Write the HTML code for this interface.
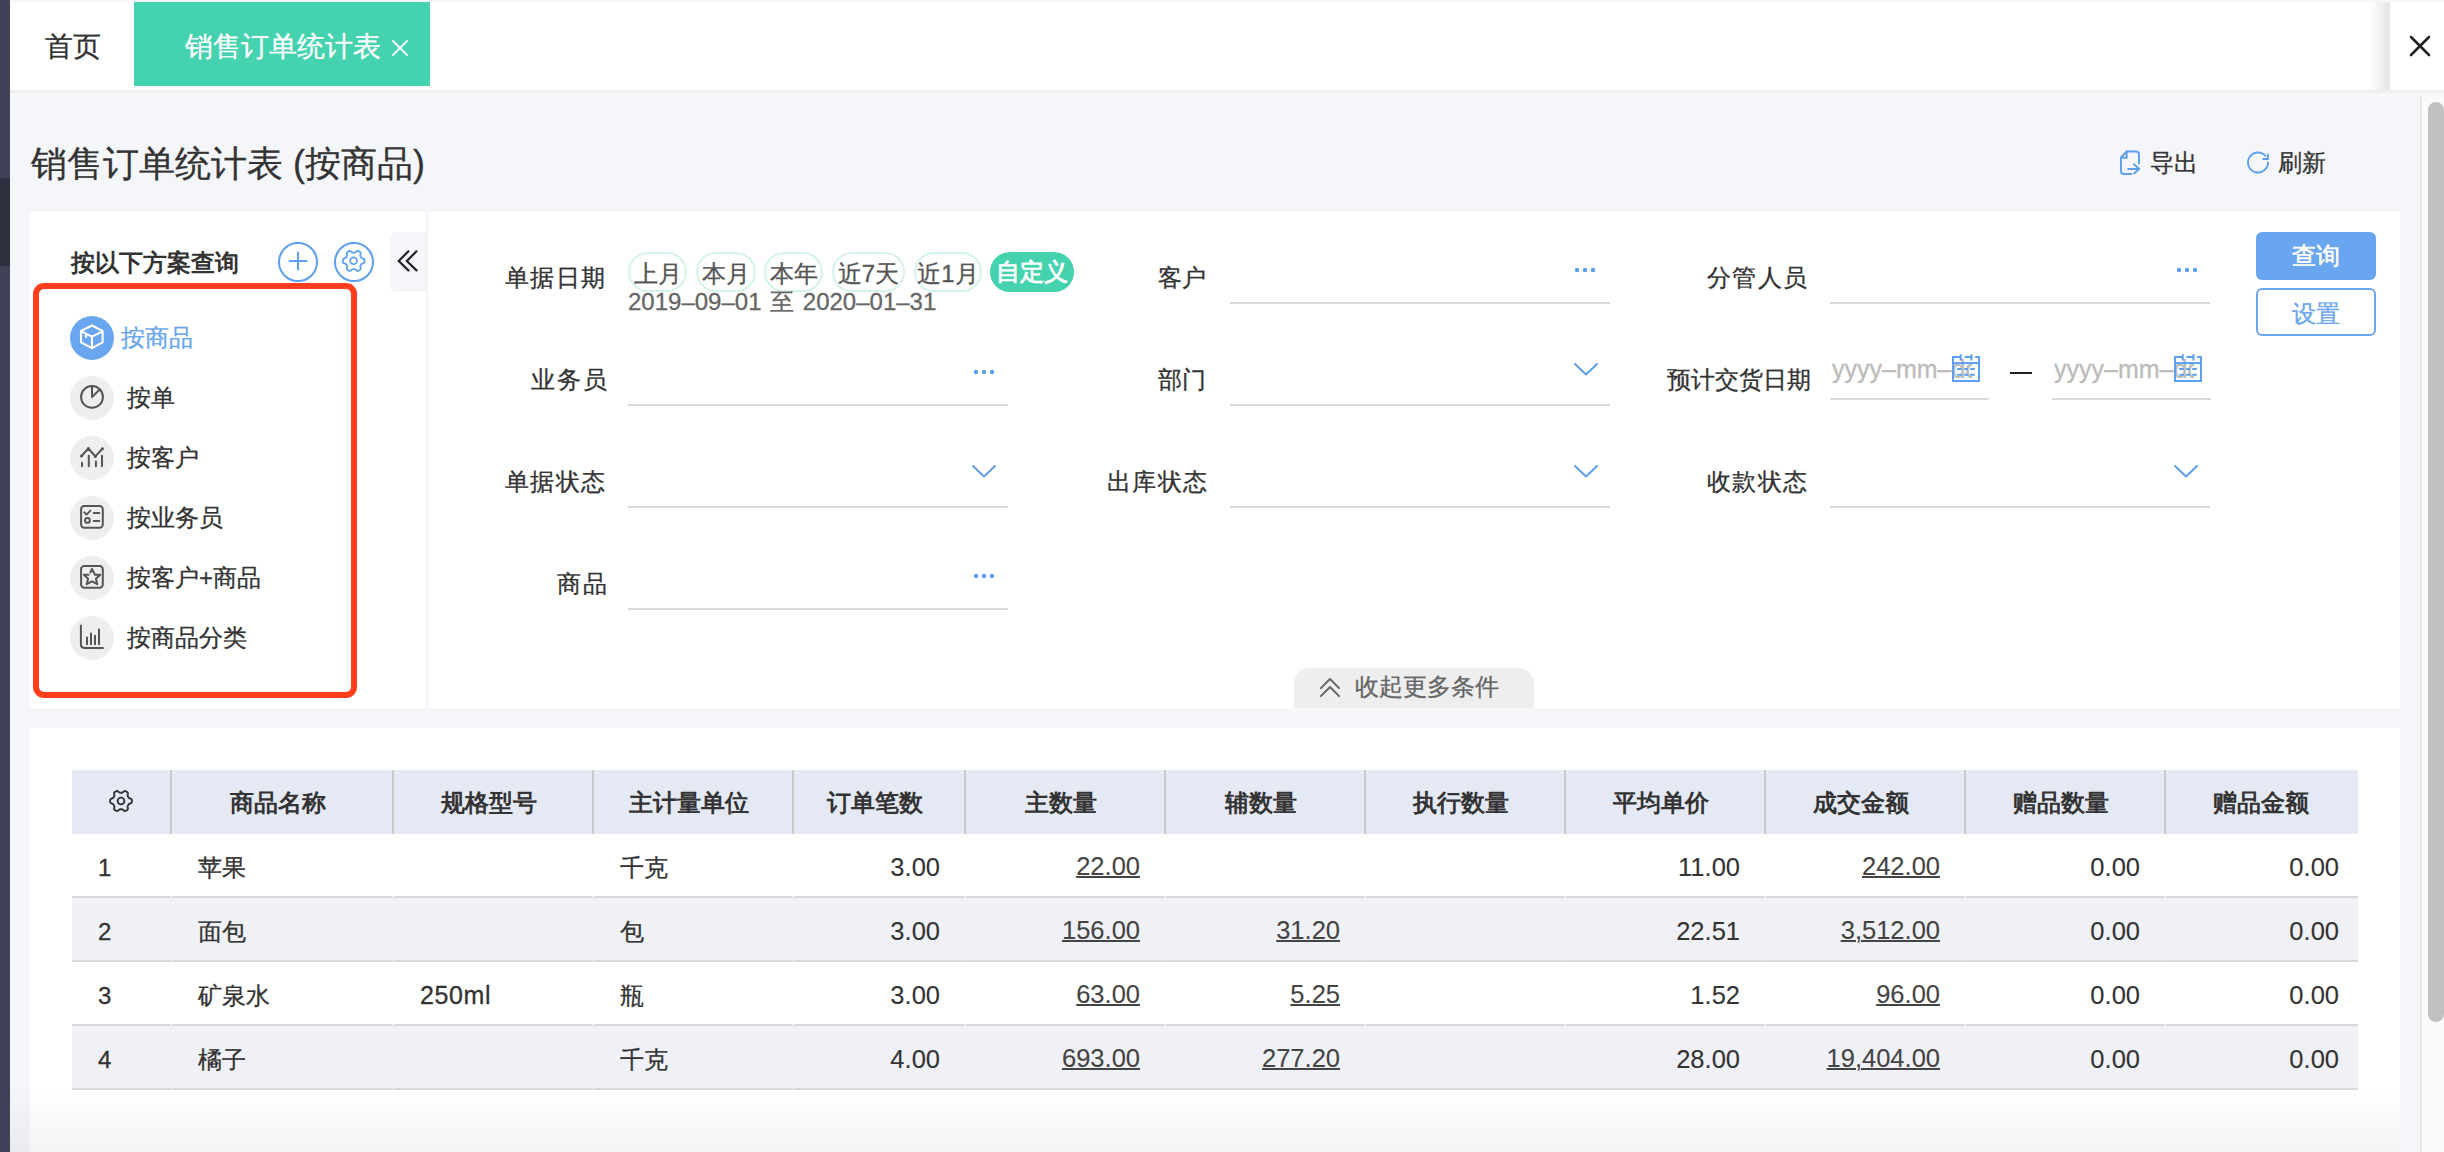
<!DOCTYPE html>
<html><head><meta charset="utf-8">
<style>
*{box-sizing:border-box;margin:0;padding:0}
html,body{width:2444px;height:1152px;overflow:hidden}
body{-webkit-font-smoothing:antialiased;-webkit-text-stroke:0.3px currentColor;position:relative;background:#f5f6fa;font-family:"Liberation Sans",sans-serif;color:#333;font-size:24px}
.a{position:absolute;white-space:nowrap}
#strip{left:0;top:0;width:10px;height:1152px;background:#414257}
#strip2{left:0;top:178px;width:10px;height:88px;background:#2d3140}
#topline{left:10px;top:0;width:2434px;height:2px;background:#f6f7fa}
#tabbar{left:10px;top:2px;width:2434px;height:88px;background:#fff}
#tabshadow{left:10px;top:90px;width:2434px;height:6px;background:linear-gradient(#ebebeb,#f3f3f3 45%,#f9f9f9 90%)}
.tab{font-size:28px;line-height:28px;margin-top:1px}
#tabactive{left:134px;top:2px;width:296px;height:84px;background:#44d3ae}
#closesep{left:2370px;top:2px;width:20px;height:88px;background:linear-gradient(90deg,rgba(255,255,255,0),#e6e6e6)}
#closearea{left:2390px;top:2px;width:54px;height:88px;background:#fff}
#title{left:31px;top:141px;font-size:36px;line-height:46px;color:#333}
.panel{background:#fff}
#qpanel{left:30px;top:212px;width:2370px;height:496px}
#tpanel{left:30px;top:728px;width:2370px;height:424px}
#divider{left:426px;top:212px;width:2px;height:496px;background:#f3f4f8}
#collapse{left:390px;top:232px;width:37px;height:60px;background:#f5f6fa;border-radius:6px 0 0 6px}
#redbox{left:33px;top:283px;width:324px;height:415px;border:6px solid #ff3e1c;border-radius:11px}
.lbl{font-size:24px;line-height:24px;color:#333;text-align:right}
.uline{height:2px;background:#d9d9d9}
.tag{height:40px;border:2px solid #d6f3eb;border-radius:20px;font-size:24px;line-height:32px;padding-top:4px;color:#555;text-align:center}
#scrolltrack{left:2420px;top:96px;width:24px;height:1056px;background:#fafafa;border-left:2px solid #e8e8e8}
#thumb{left:2428px;top:102px;width:16px;height:920px;background:#c1c1c1;border-radius:8px}
.th{-webkit-text-stroke:0;font-size:24px;line-height:24px;font-weight:bold;text-align:center;color:#333}
.td{height:64px;border-bottom:2px solid #d9d9d9;border-right:2px solid transparent}
.tt{font-size:24px;line-height:24px;color:#333}
.nm{font-size:25.5px;-webkit-text-stroke:0.1px currentColor}
.lk{text-decoration:underline;text-underline-offset:1px;text-decoration-thickness:2px;color:#444}
#bshade{left:10px;top:1085px;width:2390px;height:67px;background:linear-gradient(rgba(0,0,0,0),rgba(0,0,0,0.045))}
</style></head><body>
<div class="a" id="strip"></div>
<div class="a" id="strip2"></div>
<div class="a" id="topline"></div>
<div class="a" id="tabbar"></div>
<div class="a" id="tabshadow"></div>
<div class="a tab" style="left:45px;top:32px">首页</div>
<div class="a" id="tabactive"></div>
<div class="a tab" style="left:185px;top:32px;color:#fff">销售订单统计表</div>
<div class="a" id="closesep"></div>
<div class="a" id="closearea"></div>

<div class="a" id="title">销售订单统计表 (按商品)</div>

<div class="a panel" id="qpanel"></div>
<div class="a panel" id="tpanel"></div>
<div class="a" id="divider"></div>
<div class="a" id="collapse"></div>
<div class="a" id="redbox"></div>


<!-- tab close X -->
<svg class="a" style="left:390px;top:38px" width="20" height="20" viewBox="0 0 20 20"><path d="M2.5 2.5L17.5 17.5M17.5 2.5L2.5 17.5" stroke="#fff" stroke-width="2"/></svg>
<svg class="a" style="left:2408px;top:34px" width="24" height="24" viewBox="0 0 24 24"><path d="M3 3L21 21M21 3L3 21" stroke="#222" stroke-width="2.6" stroke-linecap="round"/></svg>

<!-- export / refresh -->
<svg class="a" style="left:2114px;top:146px" width="32" height="34" viewBox="2114 146 32 34"><g fill="none" stroke="#5c9ff0" stroke-width="1.9" stroke-linejoin="round" stroke-linecap="round"><path d="M2139 163.4V154.5Q2139 151.5 2136 151.5H2126.7L2121 157.5V171Q2121 174 2124 174H2131.4"/><path d="M2126.7 151.5V157.8H2121"/><path d="M2128.2 169H2139.2M2134 164.3L2139.2 169L2134 173.6"/></g></svg>
<div class="a" style="left:2150px;top:151px;font-size:24px;line-height:24px">导出</div>
<svg class="a" style="left:2242px;top:146px" width="32" height="34" viewBox="2242 146 32 34"><g fill="none" stroke="#5c9ff0" stroke-width="1.9" stroke-linecap="round" stroke-linejoin="round"><path d="M2268 162.5A10 10 0 1 1 2265.6 156"/><path d="M2268 154.5V159H2263.3"/></g></svg>
<div class="a" style="left:2278px;top:151px;font-size:24px;line-height:24px">刷新</div>

<!-- left panel header -->
<div class="a" style="left:71px;top:251px;font-size:24px;line-height:24px;font-weight:bold;-webkit-text-stroke:0;color:#333">按以下方案查询</div>
<svg class="a" style="left:276px;top:240px" width="44" height="44" viewBox="276 240 44 44"><g fill="none" stroke="#5c9ff0" stroke-width="2"><circle cx="298" cy="262" r="19"/><path d="M289.5 261H306.5M298 252.5V269.5" stroke-linecap="round"/></g></svg>
<svg class="a" style="left:332px;top:240px" width="44" height="44" viewBox="332 240 44 44"><g fill="none" stroke="#5c9ff0" stroke-width="2"><circle cx="354" cy="262" r="19"/><circle cx="353.6" cy="260.8" r="3.4" stroke-width="1.8"/><path d="M364.60 260.90 L364.59 261.28 L364.56 261.66 L364.50 262.04 L364.39 262.40 L364.20 262.75 L363.86 263.06 L363.31 263.30 L362.64 263.46 L362.08 263.62 L361.72 263.82 L361.49 264.05 L361.32 264.29 L361.17 264.54 L361.03 264.80 L360.89 265.05 L360.74 265.30 L360.59 265.55 L360.45 265.80 L360.32 266.07 L360.24 266.39 L360.25 266.80 L360.39 267.36 L360.58 268.02 L360.65 268.62 L360.56 269.07 L360.35 269.41 L360.08 269.68 L359.79 269.92 L359.47 270.14 L359.15 270.34 L358.82 270.52 L358.47 270.68 L358.12 270.82 L357.75 270.91 L357.35 270.92 L356.91 270.78 L356.43 270.42 L355.95 269.92 L355.53 269.52 L355.18 269.30 L354.87 269.22 L354.57 269.20 L354.28 269.19 L353.99 269.20 L353.70 269.20 L353.41 269.20 L353.12 269.19 L352.83 269.20 L352.53 269.22 L352.22 269.30 L351.87 269.52 L351.45 269.92 L350.97 270.42 L350.49 270.78 L350.05 270.92 L349.65 270.91 L349.28 270.82 L348.93 270.68 L348.58 270.52 L348.25 270.34 L347.93 270.14 L347.61 269.92 L347.32 269.68 L347.05 269.41 L346.84 269.07 L346.75 268.62 L346.82 268.02 L347.01 267.36 L347.15 266.80 L347.16 266.39 L347.08 266.07 L346.95 265.80 L346.81 265.55 L346.66 265.30 L346.51 265.05 L346.37 264.80 L346.23 264.54 L346.08 264.29 L345.91 264.05 L345.68 263.82 L345.32 263.62 L344.76 263.46 L344.09 263.30 L343.54 263.06 L343.20 262.75 L343.01 262.40 L342.90 262.04 L342.84 261.66 L342.81 261.28 L342.80 260.90 L342.81 260.52 L342.84 260.14 L342.90 259.76 L343.01 259.40 L343.20 259.05 L343.54 258.74 L344.09 258.50 L344.76 258.34 L345.32 258.18 L345.68 257.98 L345.91 257.75 L346.08 257.51 L346.23 257.26 L346.37 257.00 L346.51 256.75 L346.66 256.50 L346.81 256.25 L346.95 256.00 L347.08 255.73 L347.16 255.41 L347.15 255.00 L347.01 254.44 L346.82 253.78 L346.75 253.18 L346.84 252.73 L347.05 252.39 L347.32 252.12 L347.61 251.88 L347.93 251.66 L348.25 251.46 L348.58 251.28 L348.93 251.12 L349.28 250.98 L349.65 250.89 L350.05 250.88 L350.49 251.02 L350.97 251.38 L351.45 251.88 L351.87 252.28 L352.22 252.50 L352.53 252.58 L352.83 252.60 L353.12 252.61 L353.41 252.60 L353.70 252.60 L353.99 252.60 L354.28 252.61 L354.57 252.60 L354.87 252.58 L355.18 252.50 L355.53 252.28 L355.95 251.88 L356.43 251.38 L356.91 251.02 L357.35 250.88 L357.75 250.89 L358.12 250.98 L358.47 251.12 L358.82 251.28 L359.15 251.46 L359.47 251.66 L359.79 251.88 L360.08 252.12 L360.35 252.39 L360.56 252.73 L360.65 253.18 L360.58 253.78 L360.39 254.44 L360.25 255.00 L360.24 255.41 L360.32 255.73 L360.45 256.00 L360.59 256.25 L360.74 256.50 L360.89 256.75 L361.03 257.00 L361.17 257.26 L361.32 257.51 L361.49 257.75 L361.72 257.98 L362.08 258.18 L362.64 258.34 L363.31 258.50 L363.86 258.74 L364.20 259.05 L364.39 259.40 L364.50 259.76 L364.56 260.14 L364.59 260.52Z" stroke-width="1.8" stroke-linejoin="round"/></g></svg>
<svg class="a" style="left:390px;top:232px" width="37" height="60" viewBox="390 232 37 60"><g fill="none" stroke="#222" stroke-width="2.2" stroke-linecap="round" stroke-linejoin="round"><path d="M408.4 251.3L398.7 261L408.4 270.4"/><path d="M416.5 251.3L406.8 261L416.5 270.4"/></g></svg>
<!-- list -->
<svg class="a" style="left:70px;top:316px" width="44" height="44" viewBox="0 0 44 44"><circle cx="22" cy="22" r="22" fill="#6aa6ef"/><g fill="none" stroke="#fff" stroke-width="2.1" stroke-linejoin="round" stroke-linecap="round"><path d="M21.96 9.5L32.6 15V26.4L21.96 32.1L11 26.4V15Z"/><path d="M11.8 15.6L21.96 20.6L32.2 15.6M21.96 20.6V31.6"/><path d="M16 18V21"/></g></svg>
<div class="a" style="left:121px;top:326px;font-size:24px;line-height:24px;color:#6aa6ef">按商品</div>
<svg class="a" style="left:70px;top:376px" width="44" height="44" viewBox="0 0 44 44"><circle cx="22" cy="22" r="22" fill="#eeeeee"/><g fill="none" stroke="#555" stroke-width="2" stroke-linejoin="round" stroke-linecap="round"><circle cx="22" cy="20.9" r="10.9"/><path d="M22 10V20.9L29.8 13.6"/></g></svg>
<div class="a" style="left:127px;top:386px;font-size:24px;line-height:24px;color:#333">按单</div>
<svg class="a" style="left:70px;top:436px" width="44" height="44" viewBox="0 0 44 44"><circle cx="22" cy="22" r="22" fill="#eeeeee"/><g fill="none" stroke="#555" stroke-width="2" stroke-linejoin="round" stroke-linecap="round"><path d="M11.5 20L18.4 12.5L25.3 20.4L32.4 12.7"/><path d="M12 26.7V30.3M18.8 19.8V30.3M25.9 25.4V30.3M32 19.8V30.3"/></g><g fill="#555"><circle cx="11.5" cy="20" r="1.5"/><circle cx="18.4" cy="12.5" r="1.5"/><circle cx="25.3" cy="20.4" r="1.5"/><circle cx="32.4" cy="12.7" r="1.5"/></g></svg>
<div class="a" style="left:127px;top:446px;font-size:24px;line-height:24px;color:#333">按客户</div>
<svg class="a" style="left:70px;top:496px" width="44" height="44" viewBox="0 0 44 44"><circle cx="22" cy="22" r="22" fill="#eeeeee"/><g fill="none" stroke="#555" stroke-width="2" stroke-linejoin="round" stroke-linecap="round"><rect x="11.1" y="10" width="21.7" height="21.7" rx="3.2"/><path d="M14.4 16.4L16.5 18.6L20.4 14.6M23.8 16.9H29.3M23.8 25H29.3"/><circle cx="17.4" cy="24.4" r="2.4"/></g></svg>
<div class="a" style="left:127px;top:506px;font-size:24px;line-height:24px;color:#333">按业务员</div>
<svg class="a" style="left:70px;top:556px" width="44" height="44" viewBox="0 0 44 44"><circle cx="22" cy="22" r="22" fill="#eeeeee"/><g fill="none" stroke="#555" stroke-width="2" stroke-linejoin="round" stroke-linecap="round"><rect x="11.1" y="10" width="21.7" height="21.7" rx="3.2"/><path d="M20.4 16.4L22 12.9L24.9 18.7L30.2 18.7L25.9 22.8L27.3 28.2L22 25.4L16.7 28.2L18.1 22.8L13.9 18.7L18.6 18.7"/></g></svg>
<div class="a" style="left:127px;top:566px;font-size:24px;line-height:24px;color:#333">按客户+商品</div>
<svg class="a" style="left:70px;top:616px" width="44" height="44" viewBox="0 0 44 44"><circle cx="22" cy="22" r="22" fill="#eeeeee"/><g fill="none" stroke="#555" stroke-width="2" stroke-linejoin="round" stroke-linecap="round"><path d="M10.9 9.6V28.6Q10.9 31.9 14.2 31.9H33"/><path d="M17 21.6V28.2M21 17.6V28.2M25 19.7V28.2M29 13.6V28.2"/></g></svg>
<div class="a" style="left:127px;top:626px;font-size:24px;line-height:24px;color:#333">按商品分类</div>
<!-- form -->
<div class="a" style="left:505px;top:266px;font-size:24px;line-height:24px;letter-spacing:1.4px;color:#333">单据日期</div>
<div class="a" style="left:1158px;top:266px;font-size:24px;line-height:24px;letter-spacing:0px;color:#333">客户</div>
<div class="a" style="left:1707px;top:266px;font-size:24px;line-height:24px;letter-spacing:1.4px;color:#333">分管人员</div>
<div class="a" style="left:531px;top:368px;font-size:24px;line-height:24px;letter-spacing:2px;color:#333">业务员</div>
<div class="a" style="left:1158px;top:368px;font-size:24px;line-height:24px;letter-spacing:0px;color:#333">部门</div>
<div class="a" style="left:1667px;top:368px;font-size:24px;line-height:24px;letter-spacing:0px;color:#333">预计交货日期</div>
<div class="a" style="left:505px;top:470px;font-size:24px;line-height:24px;letter-spacing:1.4px;color:#333">单据状态</div>
<div class="a" style="left:1107px;top:470px;font-size:24px;line-height:24px;letter-spacing:1.4px;color:#333">出库状态</div>
<div class="a" style="left:1707px;top:470px;font-size:24px;line-height:24px;letter-spacing:1.4px;color:#333">收款状态</div>
<div class="a" style="left:557px;top:572px;font-size:24px;line-height:24px;letter-spacing:2px;color:#333">商品</div>
<div class="a uline" style="left:1230px;top:302px;width:380px"></div>
<div class="a uline" style="left:1830px;top:302px;width:380px"></div>
<div class="a uline" style="left:628px;top:404px;width:380px"></div>
<div class="a uline" style="left:1230px;top:404px;width:380px"></div>
<div class="a uline" style="left:628px;top:506px;width:380px"></div>
<div class="a uline" style="left:1230px;top:506px;width:380px"></div>
<div class="a uline" style="left:1830px;top:506px;width:380px"></div>
<div class="a uline" style="left:628px;top:608px;width:380px"></div>
<div class="a uline" style="left:1830px;top:398px;width:159px;border-radius:1px"></div>
<div class="a uline" style="left:2052px;top:398px;width:159px;border-radius:1px"></div>
<svg class="a" style="left:1573px;top:266px" width="24" height="8" viewBox="0 0 24 8"><g fill="#5c9ff0"><circle cx="4" cy="4" r="2.2"/><circle cx="12" cy="4" r="2.2"/><circle cx="20" cy="4" r="2.2"/></g></svg>
<svg class="a" style="left:2175px;top:266px" width="24" height="8" viewBox="0 0 24 8"><g fill="#5c9ff0"><circle cx="4" cy="4" r="2.2"/><circle cx="12" cy="4" r="2.2"/><circle cx="20" cy="4" r="2.2"/></g></svg>
<svg class="a" style="left:972px;top:368px" width="24" height="8" viewBox="0 0 24 8"><g fill="#5c9ff0"><circle cx="4" cy="4" r="2.2"/><circle cx="12" cy="4" r="2.2"/><circle cx="20" cy="4" r="2.2"/></g></svg>
<svg class="a" style="left:972px;top:572px" width="24" height="8" viewBox="0 0 24 8"><g fill="#5c9ff0"><circle cx="4" cy="4" r="2.2"/><circle cx="12" cy="4" r="2.2"/><circle cx="20" cy="4" r="2.2"/></g></svg>
<svg class="a" style="left:1573px;top:362px" width="26" height="15" viewBox="0 0 26 15"><path d="M2 2L13 12.5L24 2" fill="none" stroke="#5c9ff0" stroke-width="2" stroke-linecap="round" stroke-linejoin="round"/></svg>
<svg class="a" style="left:971px;top:464px" width="26" height="15" viewBox="0 0 26 15"><path d="M2 2L13 12.5L24 2" fill="none" stroke="#5c9ff0" stroke-width="2" stroke-linecap="round" stroke-linejoin="round"/></svg>
<svg class="a" style="left:1573px;top:464px" width="26" height="15" viewBox="0 0 26 15"><path d="M2 2L13 12.5L24 2" fill="none" stroke="#5c9ff0" stroke-width="2" stroke-linecap="round" stroke-linejoin="round"/></svg>
<svg class="a" style="left:2173px;top:464px" width="26" height="15" viewBox="0 0 26 15"><path d="M2 2L13 12.5L24 2" fill="none" stroke="#5c9ff0" stroke-width="2" stroke-linecap="round" stroke-linejoin="round"/></svg>
<div class="a tag" style="left:628px;top:252px;width:59px">上月</div>
<div class="a tag" style="left:696px;top:252px;width:60px">本月</div>
<div class="a tag" style="left:764px;top:252px;width:59px">本年</div>
<div class="a tag" style="left:832px;top:252px;width:73px">近7天</div>
<div class="a tag" style="left:914px;top:252px;width:68px">近1月</div>
<div class="a" style="left:990px;top:252px;width:84px;height:40px;border-radius:20px;background:#44d3ae;color:#fff;font-weight:bold;-webkit-text-stroke:0;font-size:24px;line-height:40px;text-align:center">自定义</div>
<div class="a" style="left:628px;top:290px;font-size:24px;line-height:24px;color:#666;word-spacing:2px">2019–09–01 至 2020–01–31</div>
<div class="a" style="left:1832px;top:354px;width:140px;overflow:hidden;font-size:25px;line-height:30px;color:#bbb">yyyy–mm–dd</div>
<div class="a" style="left:2054px;top:354px;width:140px;overflow:hidden;font-size:25px;line-height:30px;color:#bbb">yyyy–mm–dd</div>
<svg class="a" style="left:1951px;top:354px" width="30" height="30" viewBox="0 0 30 30"><g fill="none" stroke="#5c9ff0" stroke-width="2"><path d="M9.7 3.1H2V27H28V3.1H24.2M13.6 3.1H20.4"/><path d="M2 9.1H28"/><path d="M9.7 0.2V6.6M20.4 0.2V6.6"/><path d="M6.2 15H10.8M13.1 15H17M19.2 15H23.7M6.2 20.8H10.8M13.1 20.8H17M19.2 20.8H23.7"/></g></svg>
<svg class="a" style="left:2173px;top:354px" width="30" height="30" viewBox="0 0 30 30"><g fill="none" stroke="#5c9ff0" stroke-width="2"><path d="M9.7 3.1H2V27H28V3.1H24.2M13.6 3.1H20.4"/><path d="M2 9.1H28"/><path d="M9.7 0.2V6.6M20.4 0.2V6.6"/><path d="M6.2 15H10.8M13.1 15H17M19.2 15H23.7M6.2 20.8H10.8M13.1 20.8H17M19.2 20.8H23.7"/></g></svg>
<div class="a" style="left:2010px;top:372px;width:22px;height:2px;background:#222"></div>
<div class="a" style="left:2256px;top:232px;width:120px;height:48px;border-radius:6px;background:#6aa6ef;color:#fff;font-size:24px;line-height:48px;text-align:center;font-weight:400;-webkit-text-stroke:0.6px #fff">查询</div>
<div class="a" style="left:2256px;top:288px;width:120px;height:48px;border-radius:6px;border:2px solid #6aa6ef;color:#6aa6ef;font-size:24px;line-height:41px;padding-top:3px;text-align:center">设置</div>
<div class="a" style="left:1294px;top:668px;width:240px;height:40px;border-radius:16px 16px 0 0;background:#eeeeee;box-shadow:0 -3px 4px rgba(0,0,0,0.015)"></div>
<svg class="a" style="left:1316px;top:674px" width="28" height="28" viewBox="1316 674 28 28"><g fill="none" stroke="#666" stroke-width="2" stroke-linecap="round" stroke-linejoin="round"><path d="M1320.9 688.1L1330 679L1339.1 688.1"/><path d="M1320.9 696.1L1330 687L1339.1 696.1"/></g></svg>
<div class="a" style="left:1355px;top:675px;font-size:24px;line-height:24px;color:#666">收起更多条件</div>
<!-- table -->
<div class="a" style="left:72px;top:770px;width:2286px;height:64px;background:#e5e9f4"></div>
<div class="a" style="left:170px;top:770px;width:2px;height:64px;background:#c9c9c9"></div>
<div class="a" style="left:392px;top:770px;width:2px;height:64px;background:#c9c9c9"></div>
<div class="a" style="left:592px;top:770px;width:2px;height:64px;background:#c9c9c9"></div>
<div class="a" style="left:792px;top:770px;width:2px;height:64px;background:#c9c9c9"></div>
<div class="a" style="left:964px;top:770px;width:2px;height:64px;background:#c9c9c9"></div>
<div class="a" style="left:1164px;top:770px;width:2px;height:64px;background:#c9c9c9"></div>
<div class="a" style="left:1364px;top:770px;width:2px;height:64px;background:#c9c9c9"></div>
<div class="a" style="left:1564px;top:770px;width:2px;height:64px;background:#c9c9c9"></div>
<div class="a" style="left:1764px;top:770px;width:2px;height:64px;background:#c9c9c9"></div>
<div class="a" style="left:1964px;top:770px;width:2px;height:64px;background:#c9c9c9"></div>
<div class="a" style="left:2164px;top:770px;width:2px;height:64px;background:#c9c9c9"></div>
<svg class="a" style="left:105px;top:785px" width="32" height="32" viewBox="105 785 32 32"><g fill="none" stroke="#333" stroke-width="1.9" stroke-linejoin="round"><path d="M131.90 801.00 L131.88 801.57 L131.80 802.14 L131.61 802.68 L131.16 803.16 L130.27 803.48 L129.38 803.72 L128.89 804.03 L128.62 804.39 L128.40 804.77 L128.19 805.15 L127.97 805.52 L127.75 805.90 L127.57 806.32 L127.55 806.90 L127.79 807.79 L127.95 808.72 L127.76 809.35 L127.38 809.78 L126.93 810.14 L126.45 810.44 L125.95 810.71 L125.42 810.92 L124.85 811.03 L124.21 810.88 L123.48 810.27 L122.83 809.62 L122.32 809.35 L121.87 809.30 L121.43 809.30 L121.00 809.30 L120.57 809.30 L120.13 809.30 L119.68 809.35 L119.17 809.62 L118.52 810.27 L117.79 810.88 L117.15 811.03 L116.58 810.92 L116.05 810.71 L115.55 810.44 L115.07 810.14 L114.62 809.78 L114.24 809.35 L114.05 808.72 L114.21 807.79 L114.45 806.90 L114.43 806.32 L114.25 805.90 L114.03 805.52 L113.81 805.15 L113.60 804.77 L113.38 804.39 L113.11 804.03 L112.62 803.72 L111.73 803.48 L110.84 803.16 L110.39 802.68 L110.20 802.14 L110.12 801.57 L110.10 801.00 L110.12 800.43 L110.20 799.86 L110.39 799.32 L110.84 798.84 L111.73 798.52 L112.62 798.28 L113.11 797.97 L113.38 797.61 L113.60 797.23 L113.81 796.85 L114.03 796.48 L114.25 796.10 L114.43 795.68 L114.45 795.10 L114.21 794.21 L114.05 793.28 L114.24 792.65 L114.62 792.22 L115.07 791.86 L115.55 791.56 L116.05 791.29 L116.58 791.08 L117.15 790.97 L117.79 791.12 L118.52 791.73 L119.17 792.38 L119.68 792.65 L120.13 792.70 L120.57 792.70 L121.00 792.70 L121.43 792.70 L121.87 792.70 L122.32 792.65 L122.83 792.38 L123.48 791.73 L124.21 791.12 L124.85 790.97 L125.42 791.08 L125.95 791.29 L126.45 791.56 L126.93 791.86 L127.38 792.22 L127.76 792.65 L127.95 793.28 L127.79 794.21 L127.55 795.10 L127.57 795.68 L127.75 796.10 L127.97 796.48 L128.19 796.85 L128.40 797.23 L128.62 797.61 L128.89 797.97 L129.38 798.28 L130.27 798.52 L131.16 798.84 L131.61 799.32 L131.80 799.86 L131.88 800.43Z"/><circle cx="121" cy="801" r="3.4"/></g></svg>
<div class="a th" style="left:168px;top:791px;width:220px">商品名称</div>
<div class="a th" style="left:390px;top:791px;width:198px">规格型号</div>
<div class="a th" style="left:590px;top:791px;width:198px">主计量单位</div>
<div class="a th" style="left:790px;top:791px;width:170px">订单笔数</div>
<div class="a th" style="left:962px;top:791px;width:198px">主数量</div>
<div class="a th" style="left:1162px;top:791px;width:198px">辅数量</div>
<div class="a th" style="left:1362px;top:791px;width:198px">执行数量</div>
<div class="a th" style="left:1562px;top:791px;width:198px">平均单价</div>
<div class="a th" style="left:1762px;top:791px;width:198px">成交金额</div>
<div class="a th" style="left:1962px;top:791px;width:198px">赠品数量</div>
<div class="a th" style="left:2166px;top:791px;width:190px">赠品金额</div>
<div class="a td" style="left:72px;top:834px;width:100px;background:#fff"></div>
<div class="a td" style="left:172px;top:834px;width:222px;background:#fff"></div>
<div class="a td" style="left:394px;top:834px;width:200px;background:#fff"></div>
<div class="a td" style="left:594px;top:834px;width:200px;background:#fff"></div>
<div class="a td" style="left:794px;top:834px;width:172px;background:#fff"></div>
<div class="a td" style="left:966px;top:834px;width:200px;background:#fff"></div>
<div class="a td" style="left:1166px;top:834px;width:200px;background:#fff"></div>
<div class="a td" style="left:1366px;top:834px;width:200px;background:#fff"></div>
<div class="a td" style="left:1566px;top:834px;width:200px;background:#fff"></div>
<div class="a td" style="left:1766px;top:834px;width:200px;background:#fff"></div>
<div class="a td" style="left:1966px;top:834px;width:200px;background:#fff"></div>
<div class="a td" style="left:2166px;top:834px;width:192px;border-right:0;background:#fff"></div>
<div class="a tt" style="left:98px;top:856px">1</div>
<div class="a tt" style="left:198px;top:856px">苹果</div>
<div class="a tt" style="left:620px;top:856px">千克</div>
<div class="a tt nm" style="right:1504px;top:855px">3.00</div>
<div class="a tt nm lk" style="right:1304px;top:854px">22.00</div>
<div class="a tt nm" style="right:704px;top:855px">11.00</div>
<div class="a tt nm lk" style="right:504px;top:854px">242.00</div>
<div class="a tt nm" style="right:304px;top:855px">0.00</div>
<div class="a tt nm" style="right:105px;top:855px">0.00</div>
<div class="a td" style="left:72px;top:898px;width:100px;background:#f0f1f6"></div>
<div class="a td" style="left:172px;top:898px;width:222px;background:#f0f1f6"></div>
<div class="a td" style="left:394px;top:898px;width:200px;background:#f0f1f6"></div>
<div class="a td" style="left:594px;top:898px;width:200px;background:#f0f1f6"></div>
<div class="a td" style="left:794px;top:898px;width:172px;background:#f0f1f6"></div>
<div class="a td" style="left:966px;top:898px;width:200px;background:#f0f1f6"></div>
<div class="a td" style="left:1166px;top:898px;width:200px;background:#f0f1f6"></div>
<div class="a td" style="left:1366px;top:898px;width:200px;background:#f0f1f6"></div>
<div class="a td" style="left:1566px;top:898px;width:200px;background:#f0f1f6"></div>
<div class="a td" style="left:1766px;top:898px;width:200px;background:#f0f1f6"></div>
<div class="a td" style="left:1966px;top:898px;width:200px;background:#f0f1f6"></div>
<div class="a td" style="left:2166px;top:898px;width:192px;border-right:0;background:#f0f1f6"></div>
<div class="a tt" style="left:98px;top:920px">2</div>
<div class="a tt" style="left:198px;top:920px">面包</div>
<div class="a tt" style="left:620px;top:920px">包</div>
<div class="a tt nm" style="right:1504px;top:919px">3.00</div>
<div class="a tt nm lk" style="right:1304px;top:918px">156.00</div>
<div class="a tt nm lk" style="right:1104px;top:918px">31.20</div>
<div class="a tt nm" style="right:704px;top:919px">22.51</div>
<div class="a tt nm lk" style="right:504px;top:918px">3,512.00</div>
<div class="a tt nm" style="right:304px;top:919px">0.00</div>
<div class="a tt nm" style="right:105px;top:919px">0.00</div>
<div class="a td" style="left:72px;top:962px;width:100px;background:#fff"></div>
<div class="a td" style="left:172px;top:962px;width:222px;background:#fff"></div>
<div class="a td" style="left:394px;top:962px;width:200px;background:#fff"></div>
<div class="a td" style="left:594px;top:962px;width:200px;background:#fff"></div>
<div class="a td" style="left:794px;top:962px;width:172px;background:#fff"></div>
<div class="a td" style="left:966px;top:962px;width:200px;background:#fff"></div>
<div class="a td" style="left:1166px;top:962px;width:200px;background:#fff"></div>
<div class="a td" style="left:1366px;top:962px;width:200px;background:#fff"></div>
<div class="a td" style="left:1566px;top:962px;width:200px;background:#fff"></div>
<div class="a td" style="left:1766px;top:962px;width:200px;background:#fff"></div>
<div class="a td" style="left:1966px;top:962px;width:200px;background:#fff"></div>
<div class="a td" style="left:2166px;top:962px;width:192px;border-right:0;background:#fff"></div>
<div class="a tt" style="left:98px;top:984px">3</div>
<div class="a tt" style="left:198px;top:984px">矿泉水</div>
<div class="a tt" style="left:420px;top:984px;font-size:25px;letter-spacing:0.6px;margin-top:-1px">250ml</div>
<div class="a tt" style="left:620px;top:984px">瓶</div>
<div class="a tt nm" style="right:1504px;top:983px">3.00</div>
<div class="a tt nm lk" style="right:1304px;top:982px">63.00</div>
<div class="a tt nm lk" style="right:1104px;top:982px">5.25</div>
<div class="a tt nm" style="right:704px;top:983px">1.52</div>
<div class="a tt nm lk" style="right:504px;top:982px">96.00</div>
<div class="a tt nm" style="right:304px;top:983px">0.00</div>
<div class="a tt nm" style="right:105px;top:983px">0.00</div>
<div class="a td" style="left:72px;top:1026px;width:100px;background:#f0f1f6"></div>
<div class="a td" style="left:172px;top:1026px;width:222px;background:#f0f1f6"></div>
<div class="a td" style="left:394px;top:1026px;width:200px;background:#f0f1f6"></div>
<div class="a td" style="left:594px;top:1026px;width:200px;background:#f0f1f6"></div>
<div class="a td" style="left:794px;top:1026px;width:172px;background:#f0f1f6"></div>
<div class="a td" style="left:966px;top:1026px;width:200px;background:#f0f1f6"></div>
<div class="a td" style="left:1166px;top:1026px;width:200px;background:#f0f1f6"></div>
<div class="a td" style="left:1366px;top:1026px;width:200px;background:#f0f1f6"></div>
<div class="a td" style="left:1566px;top:1026px;width:200px;background:#f0f1f6"></div>
<div class="a td" style="left:1766px;top:1026px;width:200px;background:#f0f1f6"></div>
<div class="a td" style="left:1966px;top:1026px;width:200px;background:#f0f1f6"></div>
<div class="a td" style="left:2166px;top:1026px;width:192px;border-right:0;background:#f0f1f6"></div>
<div class="a tt" style="left:98px;top:1048px">4</div>
<div class="a tt" style="left:198px;top:1048px">橘子</div>
<div class="a tt" style="left:620px;top:1048px">千克</div>
<div class="a tt nm" style="right:1504px;top:1047px">4.00</div>
<div class="a tt nm lk" style="right:1304px;top:1046px">693.00</div>
<div class="a tt nm lk" style="right:1104px;top:1046px">277.20</div>
<div class="a tt nm" style="right:704px;top:1047px">28.00</div>
<div class="a tt nm lk" style="right:504px;top:1046px">19,404.00</div>
<div class="a tt nm" style="right:304px;top:1047px">0.00</div>
<div class="a tt nm" style="right:105px;top:1047px">0.00</div>
<div class="a" id="bshade"></div>
<div class="a" id="scrolltrack"></div>
<div class="a" id="thumb"></div>
</body></html>
